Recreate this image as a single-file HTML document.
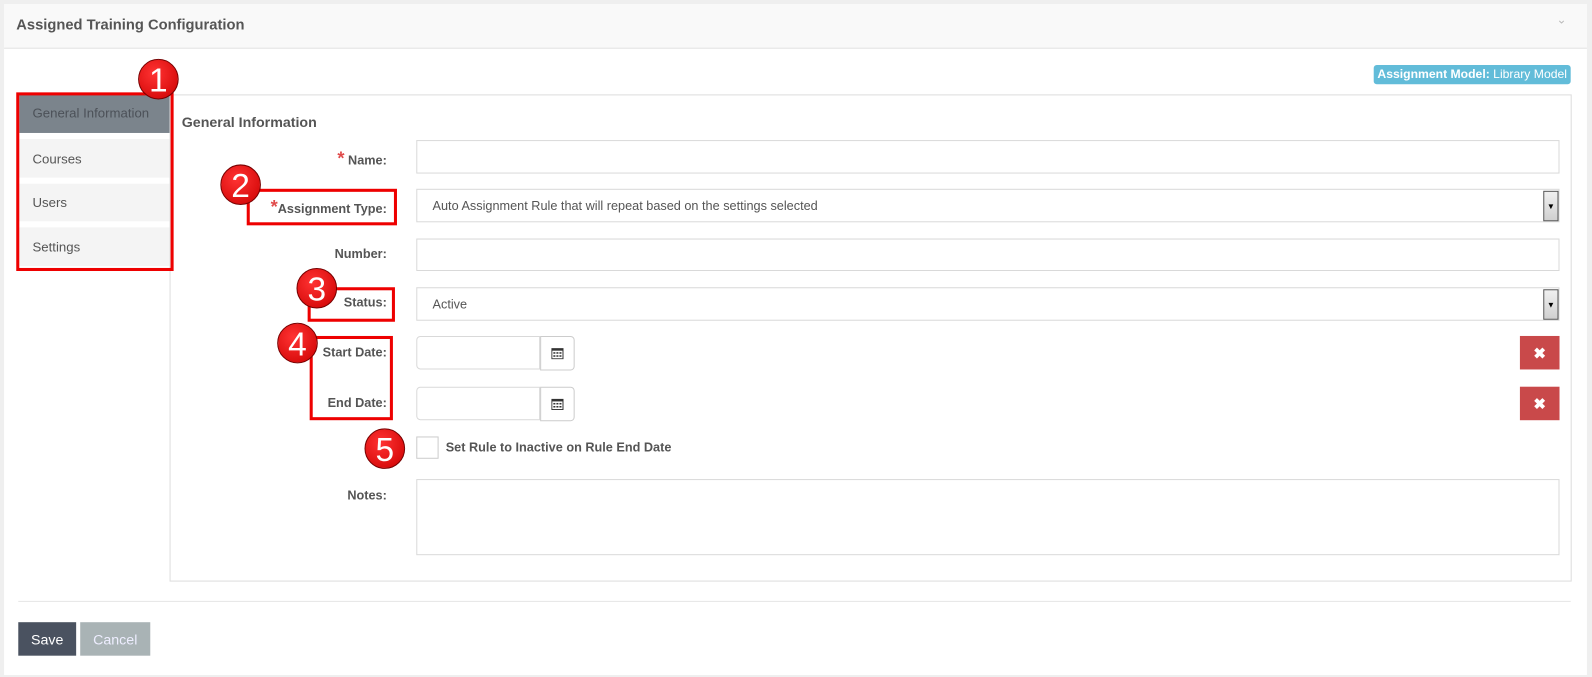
<!DOCTYPE html>
<html><head><style>
*{box-sizing:border-box;margin:0;padding:0}
html,body{width:1592px;height:677px;overflow:hidden}
body{background:#efefef;font-family:"Liberation Sans",sans-serif;font-size:13px;color:#555;position:relative}
#w{position:absolute;left:0;top:0;width:1568px;height:667px;transform:scale(1.01531,1.015);transform-origin:0 0}
.abs{position:absolute}
.panel{left:4px;top:4px;width:1559px;height:661px;background:#fff}
.hdr{left:4px;top:4px;width:1559px;height:44px;background:#f9f9f9;border-bottom:1px solid #e3e3e3}
.nav{left:19px;width:148px;background:#f4f4f4;color:#555;padding-left:13px;display:flex;align-items:center}
.lbl{right:1187px;text-align:right;font-weight:bold;color:#555;font-size:12.5px}
.inp{left:410px;width:1126px;height:33px;border:1px solid #d9d9d9;background:#fff}
.rb{border:3px solid #e00}
.circ{width:40px;height:40px;border-radius:50%;background:radial-gradient(circle at 40% 35%,#f33,#c00);border:1.5px solid #700;color:#fff;font-size:33px;display:flex;align-items:center;justify-content:center;line-height:1}
.sel{position:absolute;right:0;top:1px;width:15px;height:30px;border:1px solid #555;background:linear-gradient(#f0f0f0,#d0d0d0);font-size:8px;text-align:center;line-height:30px;color:#000}
.cal{position:absolute;left:121px;top:-1px;width:34px;height:34px;border:1px solid #ccc;border-radius:0 4px 4px 0;background:#fff;display:flex;align-items:center;justify-content:center}
.xb{left:1497px;width:39px;height:33px;background:#c9494a;color:#fff;font-weight:bold;font-size:15px;display:flex;align-items:center;justify-content:center}
.star{color:#e04b4b;font-size:18px}
</style></head><body><div id="w">
<div class="abs panel"></div>
<div class="abs hdr"></div>
<div class="abs" style="left:16px;top:17px;font-weight:bold;font-size:14.5px;color:#555">Assigned Training Configuration</div>
<div class="abs" style="left:1533px;top:12px;color:#bbb;font-size:12px">&#8964;</div>
<div class="abs" style="left:1353px;top:64px;width:194px;height:19px;background:#62bcd9;border-radius:3px;color:#fff;font-size:12px;line-height:19px;text-align:center"><b>Assignment Model:</b> Library Model</div>
<div class="abs" style="left:167px;top:93px;width:1381px;height:480px;border:1px solid #ddd"></div>
<div class="abs nav" style="top:92px;height:39px;background:#7b848c;color:#4c5158">General Information</div>
<div class="abs nav" style="top:137px;height:38px">Courses</div>
<div class="abs nav" style="top:181px;height:37px">Users</div>
<div class="abs nav" style="top:224px;height:38px">Settings</div>
<div class="abs rb" style="left:16px;top:91px;width:155px;height:176px"></div>
<div class="abs" style="left:179px;top:112px;font-weight:bold;font-size:14px;color:#555">General Information</div>

<div class="abs lbl" style="top:146px"><span class="star">*</span> Name:</div>
<div class="abs inp" style="top:138px"></div>
<div class="abs lbl" style="top:194px"><span class="star">*</span>Assignment Type:</div>
<div class="abs inp" style="top:186px;padding:9px 15px;font-size:12.5px">Auto Assignment Rule that will repeat based on the settings selected<div class="sel">&#9660;</div></div>
<div class="abs lbl" style="top:243px">Number:</div>
<div class="abs inp" style="top:235px;height:32px"></div>
<div class="abs lbl" style="top:291px">Status:</div>
<div class="abs inp" style="top:283px;padding:9px 15px;font-size:12.5px">Active<div class="sel">&#9660;</div></div>
<div class="abs lbl" style="top:340px">Start Date:</div>
<div class="abs inp" style="top:331px;width:122px;border-radius:4px 0 0 4px"><div class="cal"><svg width="12" height="12" viewBox="0 0 12 12"><rect x="0.5" y="1.5" width="11" height="10" fill="none" stroke="#333"/><rect x="0.5" y="1.5" width="11" height="2" fill="#333"/><g fill="#333"><rect x="2" y="5" width="2" height="1.5"/><rect x="5" y="5" width="2" height="1.5"/><rect x="8" y="5" width="2" height="1.5"/><rect x="2" y="8" width="2" height="1.5"/><rect x="5" y="8" width="2" height="1.5"/><rect x="8" y="8" width="2" height="1.5"/></g></svg></div></div>
<div class="abs xb" style="top:331px">&#10006;</div>
<div class="abs lbl" style="top:390px">End Date:</div>
<div class="abs inp" style="top:381px;width:122px;border-radius:4px 0 0 4px"><div class="cal"><svg width="12" height="12" viewBox="0 0 12 12"><rect x="0.5" y="1.5" width="11" height="10" fill="none" stroke="#333"/><rect x="0.5" y="1.5" width="11" height="2" fill="#333"/><g fill="#333"><rect x="2" y="5" width="2" height="1.5"/><rect x="5" y="5" width="2" height="1.5"/><rect x="8" y="5" width="2" height="1.5"/><rect x="2" y="8" width="2" height="1.5"/><rect x="5" y="8" width="2" height="1.5"/><rect x="8" y="8" width="2" height="1.5"/></g></svg></div></div>
<div class="abs xb" style="top:381px">&#10006;</div>
<div class="abs" style="left:410px;top:430px;width:22px;height:22px;border:1px solid #ccc;background:#fff"></div>
<div class="abs" style="left:439px;top:434px;font-weight:bold;font-size:12.5px">Set Rule to Inactive on Rule End Date</div>
<div class="abs lbl" style="top:481px">Notes:</div>
<div class="abs inp" style="top:472px;height:75px"></div>

<div class="abs" style="left:18px;top:592px;width:1529px;height:1px;background:#e5e5e5"></div>
<div class="abs" style="left:18px;top:613px;width:57px;height:33px;background:#4a5260;color:#fff;font-size:14px;display:flex;align-items:center;justify-content:center">Save</div>
<div class="abs" style="left:79px;top:613px;width:69px;height:33px;background:#a9b3b5;color:#eef;font-size:14px;display:flex;align-items:center;justify-content:center">Cancel</div>

<div class="abs rb" style="left:243px;top:186px;width:148px;height:36px"></div>
<div class="abs rb" style="left:303px;top:283px;width:86px;height:34px"></div>
<div class="abs rb" style="left:305px;top:331px;width:82px;height:83px"></div>

<div class="abs circ" style="left:136px;top:58px">1</div>
<div class="abs circ" style="left:217px;top:162px">2</div>
<div class="abs circ" style="left:292px;top:264px">3</div>
<div class="abs circ" style="left:273px;top:318px">4</div>
<div class="abs circ" style="left:359px;top:422px">5</div>
</div></body></html>
